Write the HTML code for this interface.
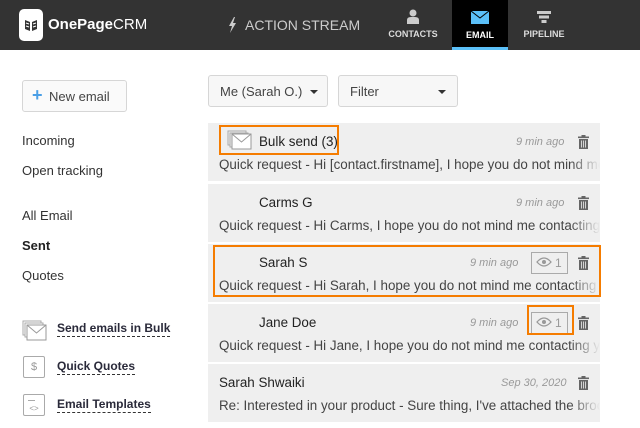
<!DOCTYPE html>
<html><head><meta charset="utf-8"><style>
*{margin:0;padding:0;box-sizing:border-box}
body{width:640px;height:428px;overflow:hidden;background:#fff;font-family:"Liberation Sans",sans-serif;color:#333;position:relative;font-size:13px}
.hdr{position:absolute;left:0;top:0;width:640px;height:50px;background:#333}
.a{position:absolute}
.nav{position:absolute;top:0;height:50px;text-align:center;color:#ddd;font-size:9px;font-weight:bold}
.btn{position:absolute;border:1px solid #d6d6d6;border-radius:3px;background:#f7f7f7;font-size:13px;color:#444}
.caret{position:absolute;width:0;height:0;border-left:4px solid transparent;border-right:4px solid transparent;border-top:4px solid #333}
.side{position:absolute;left:22px;font-size:13px;color:#333}
.link{position:absolute;left:57px;font-size:12px;font-weight:bold;color:#2a2a3a;border-bottom:1px dashed #333;line-height:15px}
.ico{position:absolute;left:23px;width:22px;height:22px;border:1px solid #aaa;border-radius:2px;color:#999;font-size:11px;text-align:center;line-height:20px}
.row{position:absolute;left:208px;width:392px;height:58px;background:#efefef;overflow:hidden}
.nm{position:absolute;top:11px;font-size:13.4px;color:#222}
.tm{position:absolute;top:13px;font-size:11px;font-style:italic;color:#999}
.sn{position:absolute;left:11px;top:34px;font-size:13.4px;color:#444;white-space:nowrap}
.fade{position:absolute;right:0;top:0;width:30px;height:58px;background:linear-gradient(to right,rgba(239,239,239,0),#efefef)}
.eye{position:absolute;top:8px;width:37px;height:22px;border:1px solid #aaa;font-size:12px;color:#999;line-height:20px;padding-left:23px}
.or{position:absolute;border:2px solid #f57c00}
</style></head><body>
<div class="hdr">
 <div class="a" style="left:19px;top:9px;width:24px;height:32px;background:#fff;border-radius:5px"></div>
 <svg class="a" style="left:23px;top:17px" width="16" height="16" viewBox="0 0 16 16"><path d="M2 3l5 2v9l-5-2zM9 5l5-2v9l-5 2z" fill="#333"/><path d="M3 6l3 1M3 9l3 1M10 7l3-1M10 10l3-1" stroke="#fff" stroke-width="1"/></svg>
 <div class="a" style="left:48px;top:16px;color:#fff;font-size:15px;font-weight:bold">OnePage<span style="font-weight:normal">CRM</span></div>
 <svg class="a" style="left:228px;top:17px" width="10" height="16" viewBox="0 0 10 16"><path d="M6 0L1 9h3l-2 7 6-10H5l2-6z" fill="#ccc"/></svg>
 <div class="a" style="left:245px;top:17px;color:#ccc;font-size:14px">ACTION STREAM</div>
 <div class="nav" style="left:380px;width:66px"><svg style="margin-top:9px" width="12" height="15" viewBox="0 0 12 15"><circle cx="6" cy="4" r="3.5" fill="#ccc"/><path d="M0 15v-4q0-3 4-3h4q4 0 4 3v4z" fill="#ccc"/></svg><div style="margin-top:3px">CONTACTS</div></div>
 <div class="nav" style="left:452px;width:56px;background:#000;color:#fff"><svg style="margin-top:11px" width="18" height="13" viewBox="0 0 18 13"><rect width="18" height="13" fill="#5bc0f8"/><path d="M0 0l9 7 9-7" stroke="#000" fill="none"/></svg><div style="margin-top:4px">EMAIL</div><div style="position:absolute;bottom:0;left:0;width:56px;height:3px;background:#5bc0f8"></div></div>
 <div class="nav" style="left:515px;width:58px"><svg style="margin-top:11px" width="14" height="12" viewBox="0 0 14 12"><rect width="14" height="3" fill="#ccc"/><rect x="2" y="4.5" width="10" height="3" fill="#ccc"/><rect x="4.5" y="9" width="5" height="3" fill="#ccc"/></svg><div style="margin-top:4px">PIPELINE</div></div>
</div>
<div class="btn" style="left:22px;top:80px;width:105px;height:32px;background:#fafafa"><span style="position:absolute;left:9px;top:4px;color:#4a9fe6;font-size:18px;font-weight:bold">+</span><span style="position:absolute;left:26px;top:8px">New email</span></div>
<div class="btn" style="left:208px;top:75px;width:120px;height:32px"><span style="position:absolute;left:11px;top:8px">Me (Sarah O.)</span><div class="caret" style="left:101px;top:14px"></div></div>
<div class="btn" style="left:338px;top:75px;width:120px;height:32px"><span style="position:absolute;left:11px;top:8px">Filter</span><div class="caret" style="left:99px;top:14px"></div></div>
<div class="side" style="top:133px">Incoming</div>
<div class="side" style="top:163px">Open tracking</div>
<div class="side" style="top:208px">All Email</div>
<div class="side" style="top:238px;font-weight:bold;color:#222">Sent</div>
<div class="side" style="top:268px">Quotes</div>
<svg class="a" style="left:22px;top:320px" width="25" height="22" viewBox="0 0 25 22"><rect x="1" y="1" width="18" height="14" fill="#fff" stroke="#aaa"/><rect x="3" y="3" width="18" height="14" fill="#fff" stroke="#aaa"/><rect x="5" y="5" width="19" height="15" fill="#fff" stroke="#999"/><path d="M5 5l9.5 8 9.5-8" stroke="#999" fill="none"/></svg>
<div class="link" style="top:321px">Send emails in Bulk</div>
<div class="ico" style="top:356px">$</div>
<div class="link" style="top:359px">Quick Quotes</div>
<div class="ico" style="top:394px;font-size:8px;line-height:28px">&lt;&gt;<div style="position:absolute;left:4px;top:5px;width:7px;height:1px;background:#aaa"></div></div>
<div class="link" style="top:397px">Email Templates</div>

<div class="row" style="top:123px"><svg class="a" style="left:19px;top:7px" width="26" height="20" viewBox="0 0 26 20"><rect x="1" y="1" width="18" height="14" fill="#efefef" stroke="#aaa"/><rect x="3" y="3" width="18" height="14" fill="#efefef" stroke="#aaa"/><rect x="5" y="4" width="19" height="15" fill="#fff" stroke="#999"/><path d="M5 4l9.5 8 9.5-8" stroke="#999" fill="none"/></svg><div class="nm" style="left:51px">Bulk send (3)</div><div class="tm" style="left:308px">9 min ago</div><div class="sn">Quick request - Hi [contact.firstname], I hope you do not mind me contacting</div><div class="fade"></div></div>
<div class="row" style="top:184px"><div class="nm" style="left:51px">Carms G</div><div class="tm" style="left:308px">9 min ago</div><div class="sn">Quick request - Hi Carms, I hope you do not mind me contacting you</div><div class="fade"></div></div>
<div class="row" style="top:244px"><div class="nm" style="left:51px">Sarah S</div><div class="tm" style="left:262px">9 min ago</div><div class="eye" style="left:323px">1</div><div class="sn">Quick request - Hi Sarah, I hope you do not mind me contacting you</div><div class="fade"></div></div>
<div class="row" style="top:304px"><div class="nm" style="left:51px">Jane Doe</div><div class="tm" style="left:262px">9 min ago</div><div class="eye" style="left:323px">1</div><div class="sn">Quick request - Hi Jane, I hope you do not mind me contacting you</div><div class="fade"></div></div>
<div class="row" style="top:364px"><div class="nm" style="left:11px">Sarah Shwaiki</div><div class="tm" style="left:293px">Sep 30, 2020</div><div class="sn">Re: Interested in your product - Sure thing, I've attached the brochure</div><div class="fade"></div></div>

<svg width="0" height="0" style="position:absolute"><defs><g id="tr"><rect x="0" y="1.5" width="11" height="1.6" fill="#666"/><rect x="3.5" y="0" width="4" height="1.8" fill="#666"/><rect x="1" y="4" width="9" height="10" fill="#666"/><path d="M3.5 5.5v7M5.5 5.5v7M7.5 5.5v7" stroke="#efefef" stroke-width=".8"/></g></defs></svg>
<svg class="a" style="left:578px;top:135px" width="11" height="14"><use href="#tr"/></svg>
<svg class="a" style="left:578px;top:196px" width="11" height="14"><use href="#tr"/></svg>
<svg class="a" style="left:578px;top:256px" width="11" height="14"><use href="#tr"/></svg>
<svg class="a" style="left:578px;top:316px" width="11" height="14"><use href="#tr"/></svg>
<svg class="a" style="left:578px;top:376px" width="11" height="14"><use href="#tr"/></svg>
<svg class="a" style="left:536px;top:257px" width="16" height="10" viewBox="0 0 16 10"><path d="M1 5q7-8 14 0q-7 8-14 0z" fill="none" stroke="#999" stroke-width="1.3"/><circle cx="8" cy="5" r="2" fill="#999"/></svg>
<svg class="a" style="left:536px;top:317px" width="16" height="10" viewBox="0 0 16 10"><path d="M1 5q7-8 14 0q-7 8-14 0z" fill="none" stroke="#999" stroke-width="1.3"/><circle cx="8" cy="5" r="2" fill="#999"/></svg>

<div class="or" style="left:219px;top:125px;width:120px;height:30px"></div>
<div class="or" style="left:213px;top:245px;width:388px;height:52px"></div>
<div class="or" style="left:527px;top:305px;width:47px;height:30px"></div>
</body></html>
